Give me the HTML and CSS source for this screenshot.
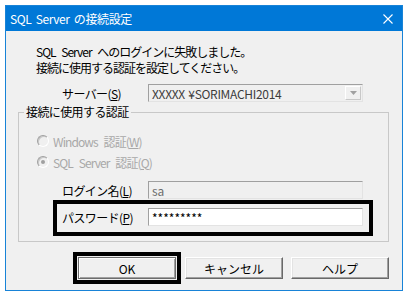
FILE: index.html
```html
<!DOCTYPE html>
<html lang="ja">
<head>
    <meta charset="UTF-8">
    <meta name="viewport" content="width=device-width, initial-scale=1.0">
    <title>SQL Server の接続設定</title>
    <link rel="stylesheet" href="styles.css">
</head>
<body>
    <div class="window">
        <div class="titlebar">
            <span class="title">SQL Server の接続設定</span>
            <span class="close">
                <svg width="10" height="10" viewBox="0 0 10 10">
                    <path d="M0.5 0.5 L9.5 9.5 M9.5 0.5 L0.5 9.5" stroke="#fff" stroke-width="1.1" fill="none"/>
                </svg>
            </span>
        </div>

        <div class="content">
            <p class="message">SQL Server へのログインに失敗しました。<br>接続に使用する認証を設定してください。</p>

            <div class="row server-row">
                <span class="row-label">サーバー(<u>S</u>)</span>
                <div class="combo">
                    <span class="combo-text">XXXXX ¥SORIMACHI2014</span>
                    <span class="combo-btn">
                        <svg width="7" height="4" viewBox="0 0 7 4">
                            <path d="M0 0 H7 L3.5 4 Z" fill="#a0a0a0"/>
                        </svg>
                    </span>
                </div>
            </div>

            <fieldset class="group">
                <legend>接続に使用する認証</legend>

                <div class="radio">
                    <span class="radio-mark"></span>
                    <span>Windows 認証(<u>W</u>)</span>
                </div>
                <div class="radio checked">
                    <span class="radio-mark"></span>
                    <span>SQL Server 認証(<u>Q</u>)</span>
                </div>

                <div class="row login-row">
                    <span class="row-label">ログイン名(<u>L</u>)</span>
                    <input class="field" type="text" value="sa" disabled>
                </div>

                <div class="highlight password-box">
                    <div class="row">
                        <span class="row-label">パスワード(<u>P</u>)</span>
                        <input class="field active" type="text" value="*********">
                    </div>
                </div>
            </fieldset>

            <div class="buttons">
                <div class="highlight ok-box">
                    <button class="btn default">OK</button>
                </div>
                <button class="btn cancel">キャンセル</button>
                <button class="btn help">ヘルプ</button>
            </div>
        </div>
    </div>
</body>
</html>
```

FILE: styles.css
```css
* {
    box-sizing: border-box;
}
body {
    margin: 0;
    padding: 5px;
    background: #fff;
    font-family: "Noto Sans CJK JP", "Noto Sans", sans-serif;
    font-size: 12px;
    color: #000;
}
u {
    text-decoration: underline;
    text-underline-offset: 1px;
}
.window {
    width: 398px;
    border: 1px solid #1883d7;
    background: #f0f0f0;
}
.titlebar {
    height: 25px;
    background: #0078d7;
    color: #fff;
    display: flex;
    align-items: center;
    justify-content: space-between;
    padding: 0 9px 0 4px;
}
.title {
    font-size: 12px;
    line-height: 16px;
    letter-spacing: -0.4px;
    word-spacing: 2px;
}
.close {
    display: flex;
    width: 10px;
    height: 10px;
}
.content {
    padding: 13px 0 6px;
}
.message {
    margin: 0 0 0 30px;
    line-height: 16px;
    letter-spacing: -1px;
    word-spacing: 4px;
}
.row {
    display: flex;
    align-items: center;
    height: 18px;
}
.row-label {
    width: 86px;
    letter-spacing: -0.6px;
}
.server-row {
    margin: 8px 0 0 56px;
}
.combo {
    width: 215px;
    height: 18px;
    display: flex;
    align-items: center;
    border: 1px solid;
    border-color: #a0a0a0 #e3e3e3 #e3e3e3 #a0a0a0;
    padding-left: 3px;
    color: #3c3c3c;
}
.combo-text {
    flex: 1;
    letter-spacing: -0.3px;
    word-spacing: 1px;
}
.combo-btn {
    width: 16px;
    height: 14px;
    margin-right: 1px;
    display: flex;
    align-items: center;
    justify-content: center;
    border: 1px solid;
    border-color: #fff #c8c8c8 #c8c8c8 #fff;
}
.group {
    margin: 2px 0 0 12px;
    width: 371px;
    border: 1px solid #c8c8c8;
    padding: 13px 0 5px;
}
.group legend {
    margin-left: 5px;
    padding: 0 2px;
    line-height: 16px;
    letter-spacing: -0.6px;
}
.radio {
    display: flex;
    align-items: center;
    gap: 4px;
    height: 16px;
    margin-left: 18px;
    color: #a8a8a8;
    letter-spacing: -0.9px;
    word-spacing: 4px;
}
.radio + .radio {
    margin-top: 5px;
}
.radio-mark {
    width: 12px;
    height: 12px;
    border-radius: 50%;
    border: 1px solid;
    border-color: #a0a0a0 #fff #fff #a0a0a0;
    box-shadow: inset 1px 1px 0 #c8c8c8;
    display: flex;
    align-items: center;
    justify-content: center;
}
.radio.checked .radio-mark::after {
    content: "";
    width: 4px;
    height: 4px;
    border-radius: 50%;
    background: #a0a0a0;
}
.login-row {
    margin: 11px 0 0 43px;
}
.field {
    width: 215px;
    height: 18px;
    margin: 0;
    padding: 0 3px;
    border: 1px solid;
    border-color: #a0a0a0 #e3e3e3 #e3e3e3 #a0a0a0;
    background: #f0f0f0;
    color: #6d6d6d;
    font: inherit;
    outline: none;
}
.field.active {
    background: #fff;
    color: #000;
}
.highlight {
    border: 4px solid #000;
}
.password-box {
    margin: 1px 0 0 34px;
    width: 320px;
    padding: 4px 0 6px 5px;
}
.buttons {
    display: flex;
    align-items: center;
    margin: 10px 0 0 67px;
}
.ok-box {
    padding: 1px;
}
.btn {
    width: 98px;
    height: 22px;
    margin: 0;
    padding: 0;
    font: inherit;
    color: #000;
    background: #f0f0f0;
    border: 1px solid;
    border-color: #fff #696969 #696969 #fff;
    box-shadow: inset -1px -1px 0 #a0a0a0, inset 1px 1px 0 #e3e3e3;
}
.btn.default {
    border-color: #6d6d6d;
    box-shadow: inset 1px 1px 0 #fff, inset -1px -1px 0 #a0a0a0;
}
.cancel {
    margin-left: 4px;
}
.help {
    margin-left: 8px;
}
```
